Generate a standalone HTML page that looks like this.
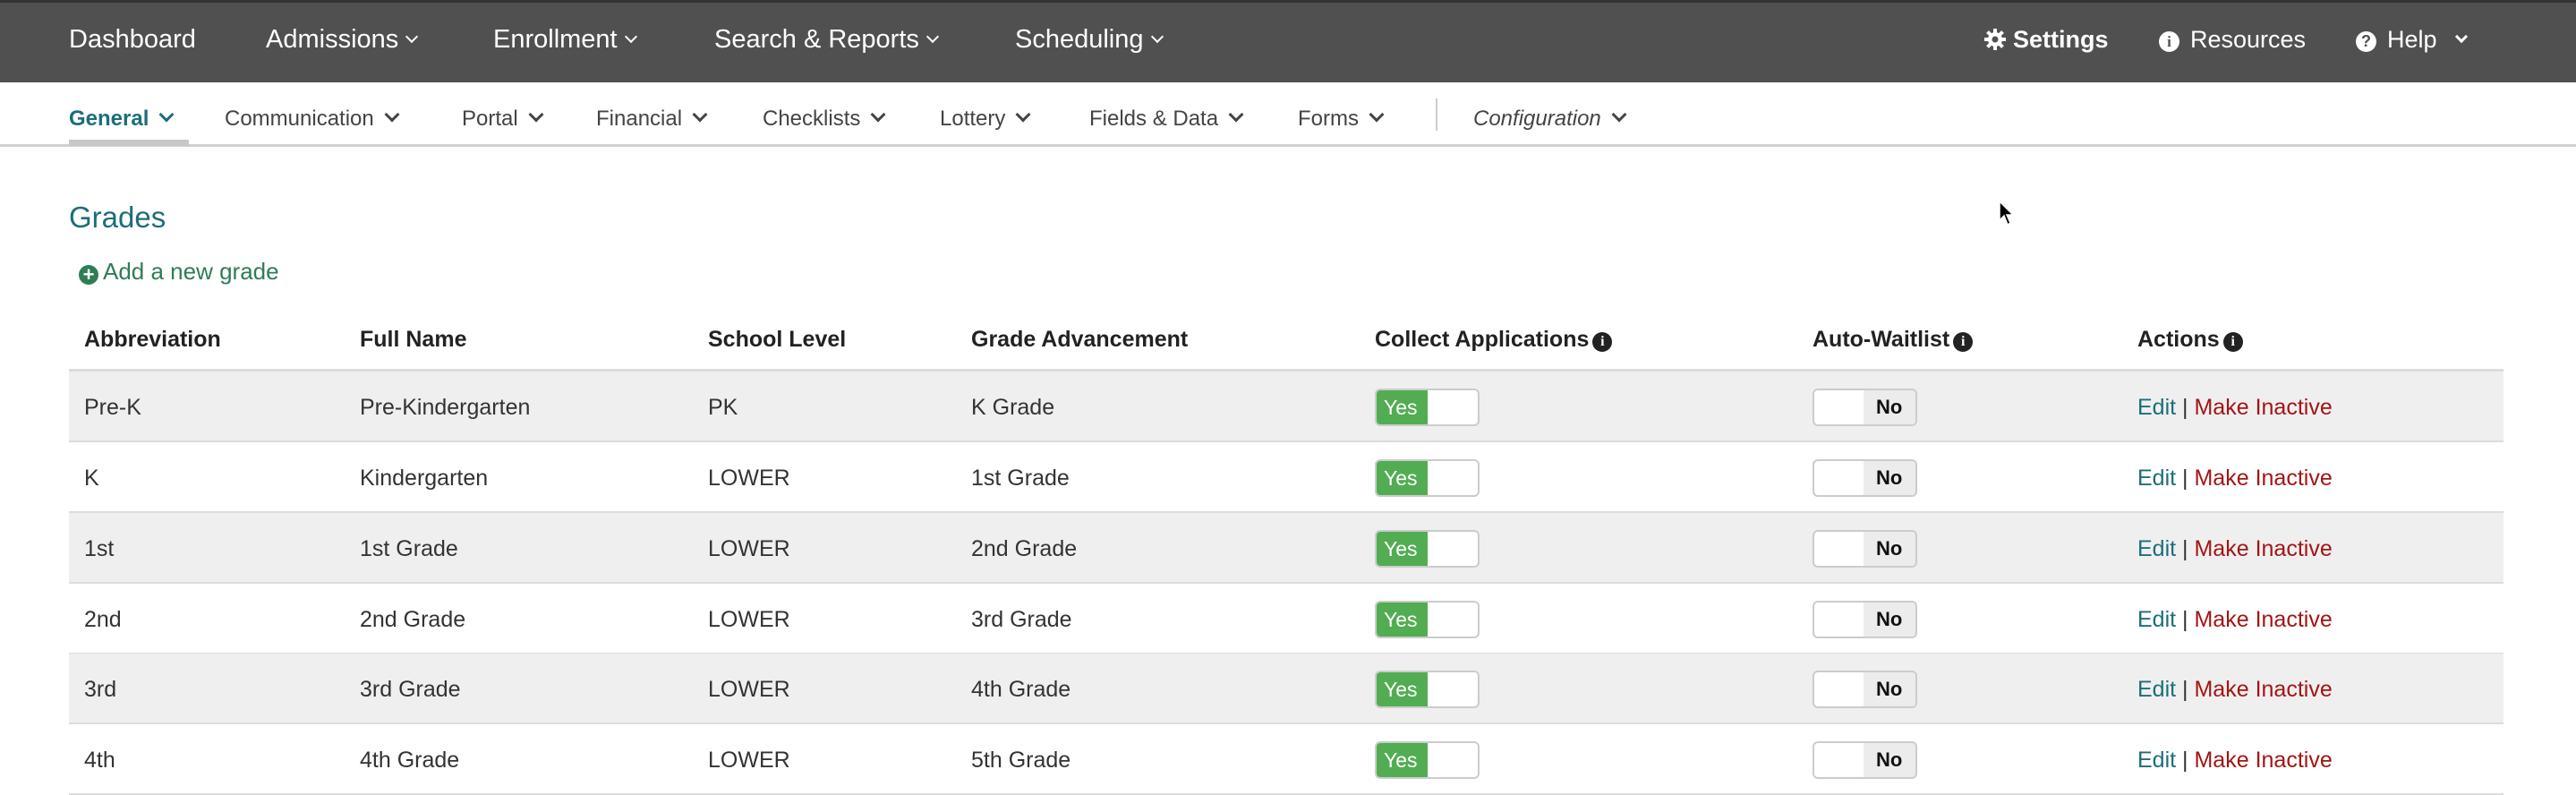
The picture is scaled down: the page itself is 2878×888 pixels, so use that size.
<!DOCTYPE html>
<html><head><meta charset="utf-8"><style>
*{box-sizing:border-box;margin:0;padding:0}
body{width:2878px;height:888px;overflow:hidden;background:#fff;font-family:"Liberation Sans",sans-serif;position:relative;color:#333}
.top{position:absolute;left:0;top:0;width:2878px;height:92px;background:#505050;border-top:3px solid #333}
.t{position:absolute;color:#fff;font-size:29px;top:25px;white-space:nowrap}
.sub{position:absolute;left:0;top:92px;width:2878px;height:72px;border-bottom:3px solid #d0d0d0}
.s{position:absolute;top:27px;font-size:24px;color:#444;white-space:nowrap}
.chev{display:inline-block;width:12px;height:12px;border-right:3px solid currentColor;border-bottom:3px solid currentColor;transform:rotate(45deg);margin-left:14px;position:relative;top:-6px}
.chevt{display:inline-block;width:10px;height:10px;border-right:2px solid #fff;border-bottom:2px solid #fff;transform:rotate(45deg);margin-left:10px;position:relative;top:-7px}
.abs{position:absolute;white-space:nowrap}
.row{position:absolute;left:77px;width:2720px;height:79px;border-bottom:2px solid #dcdcdc}
.row.g{background:#efefef}
.c{position:absolute;top:26px;font-size:25px;color:#333}
.hd{position:absolute;top:365px;font-size:25px;font-weight:bold;color:#222;white-space:nowrap}
.i{display:inline-block;width:22px;height:22px;border-radius:50%;background:#222;color:#fff;font-size:16px;text-align:center;line-height:22px;font-family:"Liberation Serif",serif;font-weight:bold;vertical-align:1px;margin-left:4px}
.ty{position:absolute;top:19px;left:1459px;width:117px;height:42px;border:2px solid #ccc;border-radius:6px;background:#fff;overflow:hidden}
.ty span{position:absolute;left:0;top:0;bottom:0;width:57px;background:#52ad52;color:#fff;font-size:23px;line-height:38px;padding-left:8px}
.tn{position:absolute;top:19px;left:1948px;width:117px;height:42px;border:2px solid #ccc;border-radius:6px;background:#fff;overflow:hidden}
.tn span{position:absolute;right:0;top:0;bottom:0;width:58px;background:#ececec;color:#111;font-weight:bold;font-size:22px;line-height:38px;padding-left:14px}
.act{position:absolute;left:2311px;top:26px;font-size:25px;white-space:nowrap}
.act a{color:#1c6e7a;text-decoration:none}.act b{font-weight:normal;color:#a31515}
</style></head><body>
<div class="top">
<div class="t" style="left:77px">Dashboard</div>
<div class="t" style="left:297px">Admissions<i class="chevt"></i></div>
<div class="t" style="left:551px">Enrollment<i class="chevt"></i></div>
<div class="t" style="left:798px">Search &amp; Reports<i class="chevt"></i></div>
<div class="t" style="left:1134px">Scheduling<i class="chevt"></i></div>
<div class="t" style="left:2217px;font-weight:bold;font-size:27px;top:26px"><svg width="24" height="24" viewBox="0 0 24 24" style="vertical-align:-3px;margin-right:8px"><g fill="#fff"><circle cx="12" cy="12" r="8"/><rect x="10" y="0" width="4" height="24"/><rect x="0" y="10" width="24" height="4"/><rect x="10" y="0" width="4" height="24" transform="rotate(45 12 12)"/><rect x="10" y="0" width="4" height="24" transform="rotate(-45 12 12)"/></g><circle cx="12" cy="12" r="3.5" fill="#505050"/></svg>Settings</div>
<div class="t" style="left:2412px;font-size:27px;top:26px"><span style="display:inline-block;width:23px;height:23px;border-radius:50%;background:#fff;color:#505050;font:bold 17px 'Liberation Serif',serif;text-align:center;line-height:23px;margin-right:12px;vertical-align:1px">i</span>Resources</div>
<div class="t" style="left:2632px;font-size:27px;top:26px"><span style="display:inline-block;width:23px;height:23px;border-radius:50%;background:#fff;color:#505050;font:bold 18px 'Liberation Sans',sans-serif;text-align:center;line-height:23px;margin-right:12px;vertical-align:1px">?</span>Help<i class="chevt" style="margin-left:22px;border-width:3px"></i></div>
</div>
<div class="sub">
<div class="s" style="left:77px;color:#1c6e7a;font-weight:bold">General<i class="chev"></i></div>
<div style="position:absolute;left:77px;top:64px;width:134px;height:7px;background:#c8c8c8"></div>
<div class="s" style="left:251px">Communication<i class="chev"></i></div>
<div class="s" style="left:516px">Portal<i class="chev"></i></div>
<div class="s" style="left:666px">Financial<i class="chev"></i></div>
<div class="s" style="left:852px">Checklists<i class="chev"></i></div>
<div class="s" style="left:1050px">Lottery<i class="chev"></i></div>
<div class="s" style="left:1217px">Fields &amp; Data<i class="chev"></i></div>
<div class="s" style="left:1450px">Forms<i class="chev"></i></div>
<div style="position:absolute;left:1604px;top:18px;width:2px;height:36px;background:#ccc"></div>
<div class="s" style="left:1646px;font-style:italic">Configuration<i class="chev"></i></div>
</div>
<div class="abs" style="left:77px;top:224px;font-size:33px;color:#1c6e7a">Grades</div>
<div class="abs" style="left:88px;top:288px;font-size:26px;color:#2e7d55"><span style="display:inline-block;width:22px;height:22px;border-radius:50%;background:#2e7d55;color:#fff;font:bold 22px/21px 'Liberation Sans',sans-serif;text-align:center;vertical-align:-2px;margin-right:5px">+</span>Add a new grade</div>
<svg style="position:absolute;left:2233px;top:224px" width="20" height="30" viewBox="0 0 20 30"><path d="M1 1 L1 22 L6 17 L10 27 L13 25 L9 16 L16 16 Z" fill="#000" stroke="#fff" stroke-width="1.5"/></svg>
<div class="hd" style="left:94px">Abbreviation</div>
<div class="hd" style="left:402px">Full Name</div>
<div class="hd" style="left:791px">School Level</div>
<div class="hd" style="left:1085px">Grade Advancement</div>
<div class="hd" style="left:1536px">Collect Applications<span class="i">i</span></div>
<div class="hd" style="left:2025px">Auto-Waitlist<span class="i">i</span></div>
<div class="hd" style="left:2388px">Actions<span class="i">i</span></div>
<div style="position:absolute;left:77px;top:412px;width:2720px;height:3px;background:#dcdcdc"></div>

<div class="row g" style="top:415px"><div class="c" style="left:17px">Pre-K</div><div class="c" style="left:325px">Pre-Kindergarten</div><div class="c" style="left:714px">PK</div><div class="c" style="left:1008px">K Grade</div><div class="ty"><span>Yes</span></div><div class="tn"><span>No</span></div><div class="act"><a>Edit</a> | <b>Make Inactive</b></div></div>
<div class="row" style="top:494px"><div class="c" style="left:17px">K</div><div class="c" style="left:325px">Kindergarten</div><div class="c" style="left:714px">LOWER</div><div class="c" style="left:1008px">1st Grade</div><div class="ty"><span>Yes</span></div><div class="tn"><span>No</span></div><div class="act"><a>Edit</a> | <b>Make Inactive</b></div></div>
<div class="row g" style="top:573px"><div class="c" style="left:17px">1st</div><div class="c" style="left:325px">1st Grade</div><div class="c" style="left:714px">LOWER</div><div class="c" style="left:1008px">2nd Grade</div><div class="ty"><span>Yes</span></div><div class="tn"><span>No</span></div><div class="act"><a>Edit</a> | <b>Make Inactive</b></div></div>
<div class="row" style="top:652px"><div class="c" style="left:17px">2nd</div><div class="c" style="left:325px">2nd Grade</div><div class="c" style="left:714px">LOWER</div><div class="c" style="left:1008px">3rd Grade</div><div class="ty"><span>Yes</span></div><div class="tn"><span>No</span></div><div class="act"><a>Edit</a> | <b>Make Inactive</b></div></div>
<div class="row g" style="top:730px"><div class="c" style="left:17px">3rd</div><div class="c" style="left:325px">3rd Grade</div><div class="c" style="left:714px">LOWER</div><div class="c" style="left:1008px">4th Grade</div><div class="ty"><span>Yes</span></div><div class="tn"><span>No</span></div><div class="act"><a>Edit</a> | <b>Make Inactive</b></div></div>
<div class="row" style="top:809px"><div class="c" style="left:17px">4th</div><div class="c" style="left:325px">4th Grade</div><div class="c" style="left:714px">LOWER</div><div class="c" style="left:1008px">5th Grade</div><div class="ty"><span>Yes</span></div><div class="tn"><span>No</span></div><div class="act"><a>Edit</a> | <b>Make Inactive</b></div></div>
</body></html>
